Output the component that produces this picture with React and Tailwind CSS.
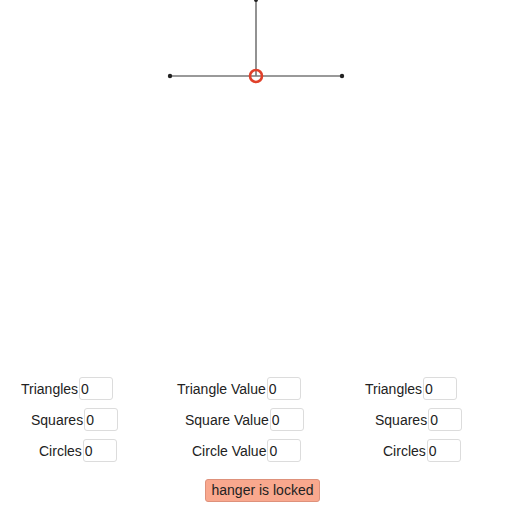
import React from "react";

const font = { fontFamily: '"Liberation Sans", Arial, sans-serif' };

function Field({ label, pl }) {
  return (
    <div className={`flex items-center h-[31px] ${pl}`}>
      <span className="text-[14px] text-[#222] leading-none">{label}</span>
      <input
        readOnly
        value="0"
        className="ml-[1px] w-[34px] h-[23px] border border-[#dcdcdc] rounded-[3px] text-[14px] text-[#222] pl-[1px] outline-none bg-white"
      />
    </div>
  );
}

export default function App() {
  return (
    <div className="w-[512px] h-[512px] bg-white relative overflow-hidden" style={font}>
      <svg width="512" height="100" viewBox="0 0 512 100" className="block">
        <line x1="256" y1="0" x2="256" y2="76" stroke="#777" strokeWidth="1.6" />
        <line x1="170" y1="76" x2="342" y2="76" stroke="#777" strokeWidth="1.6" />
        <circle cx="256" cy="0" r="2" fill="#222" />
        <circle cx="170" cy="76" r="2.2" fill="#222" />
        <circle cx="342" cy="76" r="2.2" fill="#222" />
        <circle cx="256" cy="76" r="6" fill="none" stroke="#e0402a" strokeWidth="2.6" />
      </svg>
      <div className="mt-[273px] flex">
        <div className="w-[172px] flex flex-col">
          <Field label="Triangles" pl="pl-[21px]" />
          <Field label="Squares" pl="pl-[31px]" />
          <Field label="Circles" pl="pl-[39px]" />
        </div>
        <div className="w-[172px] flex flex-col">
          <Field label="Triangle Value" pl="pl-[5px]" />
          <Field label="Square Value" pl="pl-[13px]" />
          <Field label="Circle Value" pl="pl-[20px]" />
        </div>
        <div className="w-[168px] flex flex-col">
          <Field label="Triangles" pl="pl-[21px]" />
          <Field label="Squares" pl="pl-[31px]" />
          <Field label="Circles" pl="pl-[39px]" />
        </div>
      </div>
      <div className="mt-[12px] pl-[205px]">
        <button className="w-[115px] h-[23px] bg-[#f9a88e] border border-[#de917b] rounded-[3px] text-[14px] text-[#222] leading-none">
          hanger is locked
        </button>
      </div>
    </div>
  );
}
